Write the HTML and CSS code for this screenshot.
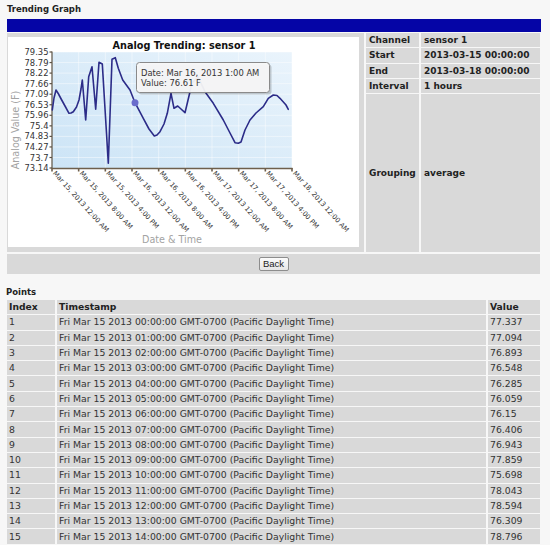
FILE: index.html
```html
<!DOCTYPE html>
<html>
<head>
<meta charset="utf-8">
<title>Trending Graph</title>
<link rel="stylesheet" href="styles.css">
</head>
<body>
<div class="page">
  <h1 class="section-title">Trending Graph</h1>
  <div class="bar"></div>
  <div class="info-grid">
    <div class="chart-cell">
      <div class="chart-box">
        <svg class="chart" width="351" height="210" viewBox="0 0 351 210" xmlns="http://www.w3.org/2000/svg">
          <defs>
            <linearGradient id="plotbg" x1="1" y1="0" x2="0" y2="1">
              <stop offset="0" stop-color="#eaf4fc"/>
              <stop offset="1" stop-color="#cce4f6"/>
            </linearGradient>
          </defs>
          <text class="c-title" x="176" y="11.5" text-anchor="middle">Analog Trending: sensor 1</text>
          <rect x="44" y="15" width="240" height="116" fill="url(#plotbg)"/>
          <g class="grid">
            <line x1="70.67" y1="15" x2="70.67" y2="131"/>
            <line x1="97.33" y1="15" x2="97.33" y2="131"/>
            <line x1="124" y1="15" x2="124" y2="131"/>
            <line x1="150.67" y1="15" x2="150.67" y2="131"/>
            <line x1="177.33" y1="15" x2="177.33" y2="131"/>
            <line x1="204" y1="15" x2="204" y2="131"/>
            <line x1="230.67" y1="15" x2="230.67" y2="131"/>
            <line x1="257.33" y1="15" x2="257.33" y2="131"/>
            <line x1="284" y1="15" x2="284" y2="131"/>
            <line x1="44" y1="15" x2="284" y2="15"/>
            <line x1="44" y1="25.55" x2="284" y2="25.55"/>
            <line x1="44" y1="36.1" x2="284" y2="36.1"/>
            <line x1="44" y1="46.65" x2="284" y2="46.65"/>
            <line x1="44" y1="57.2" x2="284" y2="57.2"/>
            <line x1="44" y1="67.75" x2="284" y2="67.75"/>
            <line x1="44" y1="78.3" x2="284" y2="78.3"/>
            <line x1="44" y1="88.85" x2="284" y2="88.85"/>
            <line x1="44" y1="99.4" x2="284" y2="99.4"/>
            <line x1="44" y1="109.95" x2="284" y2="109.95"/>
            <line x1="44" y1="120.5" x2="284" y2="120.5"/>
          </g>
          <g class="ylabels" text-anchor="end">
            <text x="40.5" y="18">79.35</text>
            <text x="40.5" y="28.55">78.79</text>
            <text x="40.5" y="39.1">78.22</text>
            <text x="40.5" y="49.65">77.66</text>
            <text x="40.5" y="60.2">77.09</text>
            <text x="40.5" y="70.75">76.53</text>
            <text x="40.5" y="81.3">75.96</text>
            <text x="40.5" y="91.85">75.4</text>
            <text x="40.5" y="102.4">74.83</text>
            <text x="40.5" y="112.95">74.27</text>
            <text x="40.5" y="123.5">73.7</text>
            <text x="40.5" y="134.05">73.14</text>
          </g>
          <g class="axis">
            <line x1="44" y1="14.5" x2="44" y2="131"/>
            <line x1="41.5" y1="15" x2="44" y2="15"/>
            <line x1="41.5" y1="25.55" x2="44" y2="25.55"/>
            <line x1="41.5" y1="36.1" x2="44" y2="36.1"/>
            <line x1="41.5" y1="46.65" x2="44" y2="46.65"/>
            <line x1="41.5" y1="57.2" x2="44" y2="57.2"/>
            <line x1="41.5" y1="67.75" x2="44" y2="67.75"/>
            <line x1="41.5" y1="78.3" x2="44" y2="78.3"/>
            <line x1="41.5" y1="88.85" x2="44" y2="88.85"/>
            <line x1="41.5" y1="99.4" x2="44" y2="99.4"/>
            <line x1="41.5" y1="109.95" x2="44" y2="109.95"/>
            <line x1="41.5" y1="120.5" x2="44" y2="120.5"/>
            <line x1="41.5" y1="131" x2="44" y2="131"/>
          </g>
          <g class="axis-x">
            <line x1="43.5" y1="131.5" x2="284.5" y2="131.5"/>
            <line x1="44" y1="131" x2="44" y2="134.5"/>
            <line x1="70.67" y1="131" x2="70.67" y2="134.5"/>
            <line x1="97.33" y1="131" x2="97.33" y2="134.5"/>
            <line x1="124" y1="131" x2="124" y2="134.5"/>
            <line x1="150.67" y1="131" x2="150.67" y2="134.5"/>
            <line x1="177.33" y1="131" x2="177.33" y2="134.5"/>
            <line x1="204" y1="131" x2="204" y2="134.5"/>
            <line x1="230.67" y1="131" x2="230.67" y2="134.5"/>
            <line x1="257.33" y1="131" x2="257.33" y2="134.5"/>
            <line x1="284" y1="131" x2="284" y2="134.5"/>
          </g>
          <g class="xlabels">
            <text transform="translate(44.5 136.5) rotate(48)">Mar 15, 2013 12:00 AM</text>
            <text transform="translate(71.17 136.5) rotate(48)">Mar 15, 2013 8:00 AM</text>
            <text transform="translate(97.83 136.5) rotate(48)">Mar 15, 2013 4:00 PM</text>
            <text transform="translate(124.5 136.5) rotate(48)">Mar 16, 2013 12:00 AM</text>
            <text transform="translate(151.17 136.5) rotate(48)">Mar 16, 2013 8:00 AM</text>
            <text transform="translate(177.83 136.5) rotate(48)">Mar 16, 2013 4:00 PM</text>
            <text transform="translate(204.5 136.5) rotate(48)">Mar 17, 2013 12:00 AM</text>
            <text transform="translate(231.17 136.5) rotate(48)">Mar 17, 2013 8:00 AM</text>
            <text transform="translate(257.83 136.5) rotate(48)">Mar 17, 2013 4:00 PM</text>
            <text transform="translate(284.5 136.5) rotate(48)">Mar 18, 2013 12:00 AM</text>
          </g>
          <text class="axis-title" transform="translate(11 93) rotate(-90)" text-anchor="middle">Analog Value (F)</text>
          <text class="axis-title" x="164" y="206" text-anchor="middle">Date &amp; Time</text>
          <polyline class="series" points="44.3,73 46,61 48,53 50.5,57 53.7,63 57,69 61,76.3 63,76 65.3,74.7 68.5,70 71,63 73,52 74.3,43 77.7,83 80.7,39.7 84,29.7 87.7,72.3 91,25.3 94.3,27 100.3,126.3 104,22.3 107.3,20.7 110.3,31.3 114.7,43 122,53 127,65.7 135.3,81.3 141,92 146.3,99 149,98 152,94.7 156,87 159.3,76.3 163,56.3 166,71.3 169.7,69 173,72 177,75.7 182,54.7 183.7,46.3 190,40 197,54.7 205.3,66.3 215.3,83 222,96 227,105.7 230.3,106.3 233,105 237,93 242,83 248,76 255.3,69.7 260.3,61.3 265.3,58 269,58.5 272,61.3 278,68 280.3,72.3"/>
          <circle class="marker" cx="127" cy="65.7" r="3.5"/>
          <rect class="tip-shadow" x="130.5" y="27.5" width="133" height="30" rx="3"/>
          <rect class="tip" x="128.5" y="25.5" width="133" height="30" rx="3"/>
          <text class="tip-text" x="133" y="39">Date: Mar 16, 2013 1:00 AM</text>
          <text class="tip-text" x="133" y="49">Value: 76.61 F</text>
        </svg>
      </div>
    </div>
    <div class="lbl">Channel</div><div class="val">sensor 1</div>
    <div class="lbl">Start</div><div class="val">2013-03-15 00:00:00</div>
    <div class="lbl">End</div><div class="val">2013-03-18 00:00:00</div>
    <div class="lbl">Interval</div><div class="val">1 hours</div>
    <div class="lbl">Grouping</div><div class="val">average</div>
  </div>
  <div class="back-row"><button class="btn" type="button">Back</button></div>

  <h2 class="section-title points-title">Points</h2>
  <table class="points">
    <thead>
      <tr><th class="c-idx">Index</th><th class="c-ts">Timestamp</th><th class="c-val">Value</th></tr>
    </thead>
    <tbody>
      <tr><td>1</td><td>Fri Mar 15 2013 00:00:00 GMT-0700 (Pacific Daylight Time)</td><td>77.337</td></tr>
      <tr><td>2</td><td>Fri Mar 15 2013 01:00:00 GMT-0700 (Pacific Daylight Time)</td><td>77.094</td></tr>
      <tr><td>3</td><td>Fri Mar 15 2013 02:00:00 GMT-0700 (Pacific Daylight Time)</td><td>76.893</td></tr>
      <tr><td>4</td><td>Fri Mar 15 2013 03:00:00 GMT-0700 (Pacific Daylight Time)</td><td>76.548</td></tr>
      <tr><td>5</td><td>Fri Mar 15 2013 04:00:00 GMT-0700 (Pacific Daylight Time)</td><td>76.285</td></tr>
      <tr><td>6</td><td>Fri Mar 15 2013 05:00:00 GMT-0700 (Pacific Daylight Time)</td><td>76.059</td></tr>
      <tr><td>7</td><td>Fri Mar 15 2013 06:00:00 GMT-0700 (Pacific Daylight Time)</td><td>76.15</td></tr>
      <tr><td>8</td><td>Fri Mar 15 2013 07:00:00 GMT-0700 (Pacific Daylight Time)</td><td>76.406</td></tr>
      <tr><td>9</td><td>Fri Mar 15 2013 08:00:00 GMT-0700 (Pacific Daylight Time)</td><td>76.943</td></tr>
      <tr><td>10</td><td>Fri Mar 15 2013 09:00:00 GMT-0700 (Pacific Daylight Time)</td><td>77.859</td></tr>
      <tr><td>11</td><td>Fri Mar 15 2013 10:00:00 GMT-0700 (Pacific Daylight Time)</td><td>75.698</td></tr>
      <tr><td>12</td><td>Fri Mar 15 2013 11:00:00 GMT-0700 (Pacific Daylight Time)</td><td>78.043</td></tr>
      <tr><td>13</td><td>Fri Mar 15 2013 12:00:00 GMT-0700 (Pacific Daylight Time)</td><td>78.594</td></tr>
      <tr><td>14</td><td>Fri Mar 15 2013 13:00:00 GMT-0700 (Pacific Daylight Time)</td><td>76.309</td></tr>
      <tr><td>15</td><td>Fri Mar 15 2013 14:00:00 GMT-0700 (Pacific Daylight Time)</td><td>78.796</td></tr>
    </tbody>
  </table>
</div>
</body>
</html>
```

FILE: styles.css
```css
html, body {
  margin: 0;
  padding: 0;
  overflow: hidden;
  background: #f7f7f7;
}

body {
  font-family: "DejaVu Sans", Verdana, sans-serif;
  color: #222;
}

.page {
  padding: 0 9px 0 7px;
}

.section-title {
  margin: 2px 0 0 0;
  font-size: 8.5px;
  line-height: 14px;
  font-weight: bold;
  color: #222;
}

.bar {
  margin-top: 3px;
  height: 13px;
  width: 534px;
  background: #0505a6;
}

.info-grid {
  margin-top: 1px;
  width: 533px;
  height: 219px;
  display: grid;
  grid-template-columns: 357px 53px 119px;
  grid-template-rows: repeat(4, 14.3px) 1fr;
  column-gap: 2px;
  row-gap: 1px;
}

.chart-cell {
  grid-column: 1;
  grid-row: 1 / span 5;
  background: #d9d9d9;
  padding: 4px 5px 5px 1px;
}

.chart-box {
  width: 351px;
  height: 210px;
  background: #ffffff;
}

.chart {
  display: block;
  font-family: "DejaVu Sans", Verdana, sans-serif;
}

.c-title {
  font-size: 9.7px;
  font-weight: bold;
  fill: #111;
}

.grid line {
  stroke: #ffffff;
  stroke-opacity: 0.45;
  stroke-width: 1;
}

.ylabels text {
  font-size: 8.4px;
  fill: #333;
}

.axis line {
  stroke: #5d5244;
  stroke-width: 1.2;
}

.axis-x line {
  stroke: #6e5f4c;
  stroke-width: 1.6;
}

.xlabels text {
  font-size: 6.8px;
  fill: #333;
}

.axis-title {
  font-size: 9.6px;
  fill: #a3a3a3;
}

.series {
  fill: none;
  stroke: #2c2c88;
  stroke-width: 1.6;
  stroke-linejoin: round;
  stroke-linecap: round;
}

.marker {
  fill: #6a6ccc;
}

.tip-shadow {
  fill: #000;
  fill-opacity: 0.18;
}

.tip {
  fill: #f7f7f7;
  fill-opacity: 0.95;
  stroke: #8a8a8a;
  stroke-width: 1;
}

.tip-text {
  font-size: 8.4px;
  fill: #333;
}

.lbl,
.val {
  background: #d9d9d9;
  font-size: 9px;
  font-weight: bold;
  line-height: 14.3px;
  padding-left: 3px;
  display: flex;
  align-items: center;
  white-space: nowrap;
}

.back-row {
  margin-top: 2px;
  width: 533px;
  height: 20px;
  background: #d9d9d9;
  display: flex;
  justify-content: center;
  align-items: flex-start;
  padding-top: 3px;
  box-sizing: border-box;
}

.btn {
  margin: 0;
  width: 30px;
  height: 14px;
  padding: 0;
  font-family: "Liberation Sans", Arial, sans-serif;
  font-size: 9.5px;
  line-height: 12px;
  color: #222;
  background: linear-gradient(#fbfbfb, #e6e6e6);
  border: 1px solid #8d8d8d;
  border-radius: 2px;
}

.points-title {
  margin-top: 12px;
  margin-left: -1px;
  line-height: 13px;
}

.points {
  margin: 0 0 0 -2px;
  width: 537px;
  border-collapse: separate;
  border-spacing: 2px 1px;
  table-layout: fixed;
}

.points th,
.points td {
  background: #d9d9d9;
  height: 14.3px;
  padding: 0 0 0 2px;
  line-height: 14px;
  text-align: left;
  vertical-align: middle;
  white-space: nowrap;
  overflow: hidden;
}

.points th {
  font-size: 9.2px;
  font-weight: bold;
}

.points td {
  font-size: 9.3px;
  color: #333;
}

.c-idx { width: 46px; }
.c-ts { width: 427px; }
.c-val { width: 50px; }
```
